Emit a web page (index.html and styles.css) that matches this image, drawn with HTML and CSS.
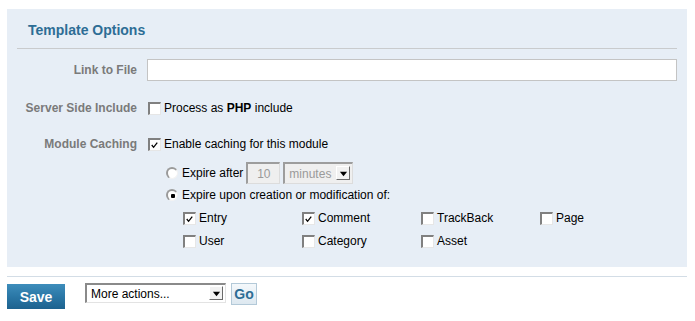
FILE: index.html
```html
<!DOCTYPE html>
<html>
<head>
<meta charset="utf-8">
<link rel="stylesheet" href="styles.css">
</head>
<body>
<div class="panel">
  <div class="panel-head"><h2 class="title">Template Options</h2></div>
  <div class="rule"></div>

  <div class="row row-link">
    <div class="label">Link to File</div>
    <div class="field"><div class="text-input"></div></div>
  </div>

  <div class="row row-ssi">
    <div class="label">Server Side Include</div>
    <div class="field">
      <span class="cb"></span><span class="opt">Process as <b>PHP</b> include</span>
    </div>
  </div>

  <div class="row row-cache">
    <div class="label">Module Caching</div>
    <div class="field">
      <span class="cb checked"><svg viewBox="0 0 12 12" width="12" height="12"><path d="M3 6 L5 8.5 L9 3.5" fill="none" stroke="#000" stroke-width="1.4"/></svg></span><span class="opt">Enable caching for this module</span>
    </div>
  </div>

  <div class="sub">
    <div class="sub-row radio-row1">
      <span class="radio"></span><span class="opt-r">Expire after</span>
      <span class="num-input">10</span>
      <span class="unit-select">minutes<span class="sel-arrow"><svg viewBox="0 0 10 10" width="9" height="9"><path d="M1 3 L9 3 L5 8 Z" fill="#000"/></svg></span></span>
    </div>
    <div class="sub-row radio-row2">
      <span class="radio on"><span class="dot"></span></span><span class="opt-r">Expire upon creation or modification of:</span>
    </div>
    <div class="grid">
      <div class="cell"><span class="cb checked"><svg viewBox="0 0 12 12" width="12" height="12"><path d="M3 6 L5 8.5 L9 3.5" fill="none" stroke="#000" stroke-width="1.4"/></svg></span><span class="opt">Entry</span></div>
      <div class="cell"><span class="cb checked"><svg viewBox="0 0 12 12" width="12" height="12"><path d="M3 6 L5 8.5 L9 3.5" fill="none" stroke="#000" stroke-width="1.4"/></svg></span><span class="opt">Comment</span></div>
      <div class="cell"><span class="cb"></span><span class="opt">TrackBack</span></div>
      <div class="cell"><span class="cb"></span><span class="opt">Page</span></div>
      <div class="cell"><span class="cb"></span><span class="opt">User</span></div>
      <div class="cell"><span class="cb"></span><span class="opt">Category</span></div>
      <div class="cell"><span class="cb"></span><span class="opt">Asset</span></div>
    </div>
  </div>
</div>

<div class="actions">
  <button class="save">Save</button>
  <span class="more-select">More actions...<span class="sel-arrow"><svg viewBox="0 0 10 10" width="9" height="9"><path d="M1 3 L9 3 L5 8 Z" fill="#000"/></svg></span></span>
  <button class="go">Go</button>
</div>
</body>
</html>
```

FILE: styles.css
```css
html, body {
  margin: 0;
  padding: 0;
  background: #fff;
  font-family: "Liberation Sans", Arial, Helvetica, sans-serif;
  font-size: 12px;
  color: #000;
}

.panel {
  margin: 9px 0 0 7px;
  width: 680px;
  background: #e7eef6;
  padding-bottom: 18px;
}

.panel-head {
  height: 39px;
  display: flex;
  align-items: center;
  padding-left: 21px;
  box-sizing: border-box;
  padding-top: 3px;
}

.title {
  margin: 0;
  font-size: 14px;
  font-weight: bold;
  color: #2d6d95;
}

.rule {
  margin: 0 10px;
  border-top: 1px solid #c9cbcd;
}

.row {
  display: flex;
  align-items: center;
}

.label {
  width: 130px;
  text-align: right;
  font-weight: bold;
  color: #7a7a7a;
  margin-right: 10px;
  flex: none;
}

.field {
  display: flex;
  align-items: center;
  flex: 1;
}

.row-link { margin-top: 10px; height: 22px; }
.row-ssi { margin-top: 19px; height: 16px; }
.row-cache { margin-top: 20px; height: 16px; }

.text-input {
  width: 530px;
  height: 22px;
  box-sizing: border-box;
  background: #fff;
  border: 1px solid #c4c4c4;
}

.cb {
  width: 13px;
  height: 13px;
  box-sizing: border-box;
  background: #fff;
  border-top: 2px solid #808080;
  border-left: 2px solid #808080;
  border-right: 1px solid #e6e6e6;
  border-bottom: 1px solid #e6e6e6;
  margin-left: 1px;
  margin-right: 3px;
  flex: none;
  display: flex;
  align-items: center;
  justify-content: center;
}

.cb svg { display: block; margin-left: -1px; margin-top: 0; }

.opt { line-height: 16px; }
.opt b { font-weight: bold; }

.sub {
  padding-left: 159px;
}

.sub-row {
  display: flex;
  align-items: center;
}

.radio-row1 { margin-top: 10px; height: 22px; }
.radio-row2 { margin-top: 3px; height: 16px; }

.radio {
  width: 12px;
  height: 12px;
  box-sizing: border-box;
  border-radius: 50%;
  background: #fff;
  border-top: 2px solid #9a9a9a;
  border-left: 2px solid #9a9a9a;
  border-right: 1px solid #f2f2f2;
  border-bottom: 1px solid #f2f2f2;
  margin-right: 4px;
  flex: none;
  display: flex;
  align-items: center;
  justify-content: center;
}

.radio .dot {
  width: 4px;
  height: 4px;
  background: #000;
  border-radius: 1px;
}

.opt-r { line-height: 16px; }

.num-input {
  width: 34px;
  height: 22px;
  box-sizing: border-box;
  margin-left: 3px;
  background: #efefef;
  border-top: 2px solid #9d9d9d;
  border-left: 2px solid #9d9d9d;
  border-right: 1px solid #dcdcdc;
  border-bottom: 1px solid #dcdcdc;
  color: #9a9a9a;
  display: flex;
  align-items: center;
  justify-content: center;
}

.unit-select {
  width: 70px;
  height: 22px;
  box-sizing: border-box;
  margin-left: 3px;
  background: #efefef;
  border-top: 2px solid #9d9d9d;
  border-left: 2px solid #9d9d9d;
  border-right: 1px solid #dcdcdc;
  border-bottom: 1px solid #dcdcdc;
  color: #9a9a9a;
  display: flex;
  align-items: center;
  padding-left: 4px;
  position: relative;
}

.sel-arrow {
  position: absolute;
  right: 2px;
  top: 2px;
  width: 14px;
  height: 14px;
  box-sizing: border-box;
  background: #f2f2f2;
  border-right: 1px solid #6a6a6a;
  border-bottom: 1px solid #6a6a6a;
  border-top: 1px solid #fff;
  border-left: 1px solid #fff;
  display: flex;
  align-items: center;
  justify-content: center;
}

.sel-arrow svg { display: block; }

.grid {
  display: grid;
  grid-template-columns: repeat(4, 119px);
  row-gap: 7px;
  margin-top: 7px;
  padding-left: 16px;
}

.cell {
  display: flex;
  align-items: center;
  height: 16px;
}

.actions {
  margin: 9px 0 0 7px;
  width: 680px;
  border-top: 1px solid #d3dde6;
  padding-top: 7px;
  display: flex;
  align-items: flex-start;
}

.save {
  width: 58px;
  height: 25px;
  margin: 0;
  padding: 0;
  border: none;
  background: linear-gradient(#3d8dbb, #2a77a6 50%, #1d628e);
  color: #fff;
  font-family: "Liberation Sans", Arial, sans-serif;
  font-weight: bold;
  font-size: 14px;
}

.more-select {
  margin-left: 20px;
  margin-top: -1px;
  width: 141px;
  height: 20px;
  box-sizing: border-box;
  background: #fff;
  border-top: 2px solid #8a8a8a;
  border-left: 2px solid #8a8a8a;
  border-right: 1px solid #e3e3e3;
  border-bottom: 1px solid #e3e3e3;
  padding-left: 4px;
  display: flex;
  align-items: center;
  position: relative;
  font-size: 12px;
}

.more-select .sel-arrow { top: 1px; }

.go {
  margin: -1px 0 0 5px;
  width: 26px;
  height: 22px;
  padding: 0;
  box-sizing: border-box;
  border: 1px solid #b3c9d8;
  background: linear-gradient(#f4f8fb, #dde8f0);
  color: #2d6d95;
  font-family: "Liberation Sans", Arial, sans-serif;
  font-weight: bold;
  font-size: 14px;
}
```
